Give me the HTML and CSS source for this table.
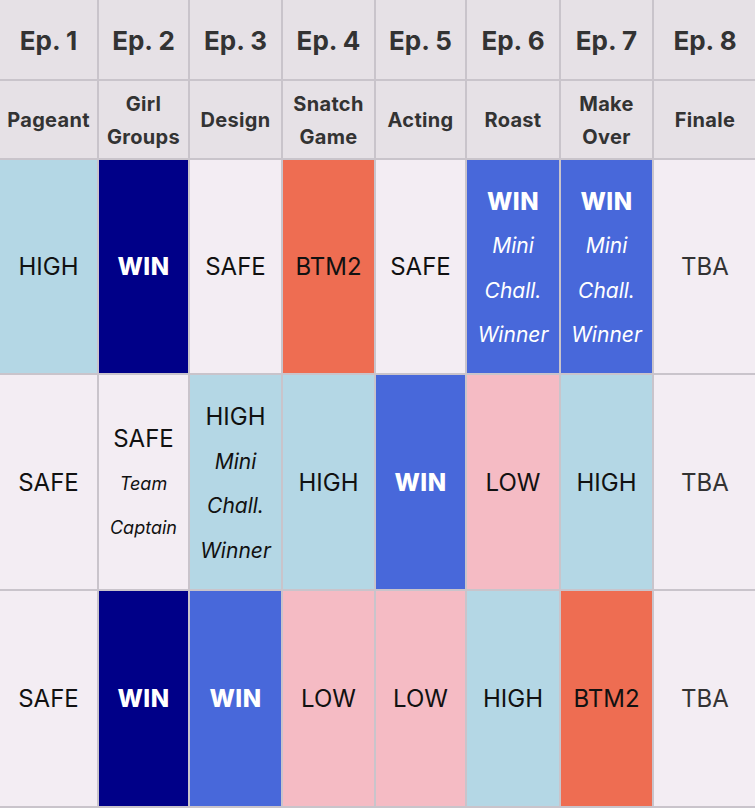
FILE: index.html
```html
<!DOCTYPE html>
<html lang="en">
<head>
<meta charset="utf-8">
<title>Episodes</title>
<link rel="stylesheet" href="styles.css">
</head>
<body>
<div class="board">
  <div class="cell head ep">Ep. 1</div>
  <div class="cell head ep">Ep. 2</div>
  <div class="cell head ep">Ep. 3</div>
  <div class="cell head ep">Ep. 4</div>
  <div class="cell head ep">Ep. 5</div>
  <div class="cell head ep">Ep. 6</div>
  <div class="cell head ep">Ep. 7</div>
  <div class="cell head ep">Ep. 8</div>

  <div class="cell head ch">Pageant</div>
  <div class="cell head ch">Girl<br>Groups</div>
  <div class="cell head ch">Design</div>
  <div class="cell head ch">Snatch<br>Game</div>
  <div class="cell head ch">Acting</div>
  <div class="cell head ch">Roast</div>
  <div class="cell head ch">Make<br>Over</div>
  <div class="cell head ch">Finale</div>

  <div class="cell high">HIGH</div>
  <div class="cell win">WIN</div>
  <div class="cell safe">SAFE</div>
  <div class="cell btm">BTM2</div>
  <div class="cell safe">SAFE</div>
  <div class="cell win2 multi"><span class="b">WIN</span><i>Mini</i><i>Chall.</i><i>Winner</i></div>
  <div class="cell win2 multi"><span class="b">WIN</span><i>Mini</i><i>Chall.</i><i>Winner</i></div>
  <div class="cell tba">TBA</div>

  <div class="cell safe">SAFE</div>
  <div class="cell safe multi"><span>SAFE</span><i class="sm">Team</i><i class="sm">Captain</i></div>
  <div class="cell high multi"><span>HIGH</span><i>Mini</i><i>Chall.</i><i>Winner</i></div>
  <div class="cell high">HIGH</div>
  <div class="cell win2">WIN</div>
  <div class="cell low">LOW</div>
  <div class="cell high">HIGH</div>
  <div class="cell tba">TBA</div>

  <div class="cell safe">SAFE</div>
  <div class="cell win">WIN</div>
  <div class="cell win2">WIN</div>
  <div class="cell low">LOW</div>
  <div class="cell low">LOW</div>
  <div class="cell high">HIGH</div>
  <div class="cell btm">BTM2</div>
  <div class="cell tba">TBA</div>
</div>
</body>
</html>
```

FILE: styles.css
```css
html, body {
  margin: 0;
  padding: 0;
  background: #ffffff;
}

body {
  font-family: Inter, "Noto Sans", sans-serif;
  overflow: hidden;
}

.board {
  display: grid;
  grid-template-columns: 97px 89px 91px 91px 89px 92px 91px 102px;
  grid-template-rows: 79px 77px 213px 214px 215px;
  gap: 2px;
  background: #c9c4cb;
  padding-bottom: 2px;
  width: 755px;
  overflow: hidden;
}

.cell {
  display: flex;
  flex-direction: column;
  align-items: center;
  justify-content: center;
  text-align: center;
  font-size: 24px;
  color: #111111;
}

.head {
  background: #e6e1e6;
  color: #333333;
  font-weight: 700;
}

.ep {
  font-size: 26px;
  padding-top: 1px;
}

.ch {
  font-size: 20px;
  line-height: 33px;
  letter-spacing: 0.3px;
  padding-top: 2px;
}

.safe { background: #f3edf3; }
.tba { background: #f3edf3; color: #333333; }
.high { background: #b4d7e5; }
.win { background: #000088; color: #ffffff; font-weight: 800; letter-spacing: 0.5px; }
.win2 { background: #4868da; color: #ffffff; font-weight: 800; letter-spacing: 0.5px; }
.btm { background: #ee6d52; }
.low { background: #f5bbc4; }

.multi {
  line-height: 44.5px;
  font-weight: 400;
  letter-spacing: 0;
  padding-top: 4px;
}

.multi .b {
  font-weight: 800;
  letter-spacing: 0.5px;
}

.multi i {
  font-size: 21px;
}

.multi i.sm {
  font-size: 18px;
}
```
